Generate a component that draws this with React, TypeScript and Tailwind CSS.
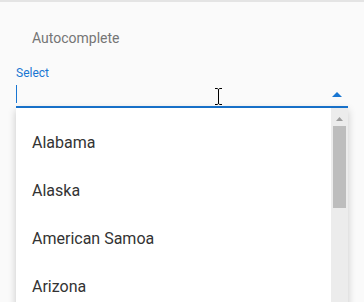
import React from "react";

const states = ["Alabama", "Alaska", "American Samoa", "Arizona"];

export default function App() {
  return (
    <div
      className="relative w-[364px] h-[302px] overflow-hidden bg-[#fafafa] border-t-2 border-[#e4e4e4]"
      style={{ fontFamily: "Roboto, 'Liberation Sans', sans-serif" }}
    >
      {/* Title */}
      <div className="pl-8 mt-[26px] text-[14px] leading-[20px] text-[#757575]">
        Autocomplete
      </div>

      {/* Field */}
      <div className="mx-4 mt-4">
        <div className="pt-px text-[12px] leading-[16px] text-[#1976d2]">Select</div>
        <div className="relative h-[27px] border-b-2 border-[#1976d2]">
          <div className="absolute left-0 top-[4px] w-px h-[18px] bg-[#1976d2]" />
          <svg
            className="absolute right-[6px] top-[11px]"
            width="10"
            height="5"
            viewBox="0 0 10 5"
          >
            <path d="M0 5 L5 0 L10 5 Z" fill="#1976d2" />
          </svg>
        </div>

        {/* Dropdown */}
        <div className="relative flex bg-white h-[200px] shadow-[0_2px_8px_rgba(0,0,0,0.2)]">
          <div className="flex-1 pt-[11px]">
            {states.map((s) => (
              <div
                key={s}
                className="h-12 flex items-center pl-4 text-[16px] text-[#333]"
              >
                {s}
              </div>
            ))}
          </div>
          <div className="w-[17px] bg-[#ececec] flex flex-col items-center">
            <svg className="mt-[9px]" width="7" height="4" viewBox="0 0 7 4">
              <path d="M0 4 L3.5 0 L7 4 Z" fill="#9e9e9e" />
            </svg>
            <div className="mt-[5px] w-[13px] h-[82px] bg-[#bdbdbd]" />
          </div>
        </div>
      </div>

      {/* Mouse I-beam cursor */}
      <svg
        className="absolute left-[214px] top-[86px]"
        width="9"
        height="17"
        viewBox="0 0 9 17"
      >
        <path
          d="M1 0.5 H3.5 M5.5 0.5 H8 M3.5 0.5 Q4.5 1 4.5 2 V15 Q4.5 16 3.5 16.5 M5.5 0.5 Q4.5 1 4.5 2 M4.5 15 Q4.5 16 5.5 16.5 M1 16.5 H3.5 M5.5 16.5 H8"
          stroke="#000"
          strokeWidth="1"
          fill="none"
        />
      </svg>
    </div>
  );
}
